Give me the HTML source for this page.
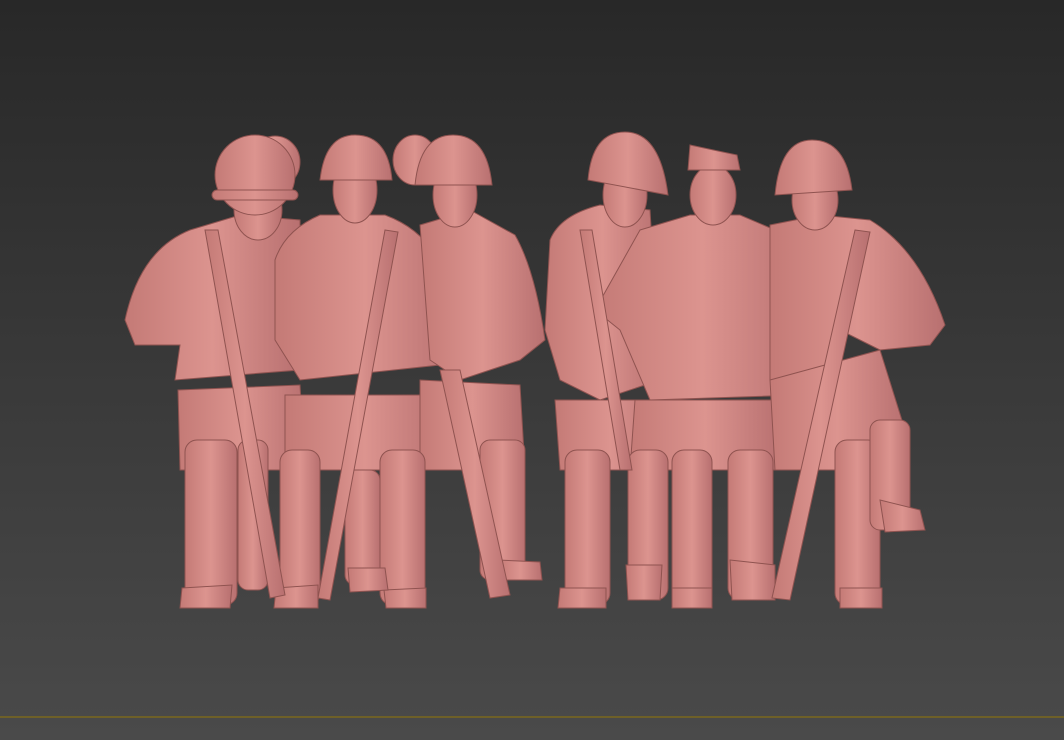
<!DOCTYPE html>
<html><head><meta charset="utf-8"><style>
html,body{margin:0;padding:0;width:1064px;height:740px;overflow:hidden;background:#333}
svg{display:block}
</style></head><body>
<svg width="1064" height="740" viewBox="0 0 1064 740">
<defs>
<linearGradient id="bg" x1="0" y1="0" x2="0" y2="1">
<stop offset="0" stop-color="#282828"/><stop offset="1" stop-color="#4a4a4a"/>
</linearGradient>
<linearGradient id="sk" x1="0" y1="0" x2="1" y2="0">
<stop offset="0" stop-color="#c47a76"/><stop offset="0.5" stop-color="#dc948f"/><stop offset="1" stop-color="#b87070"/>
</linearGradient>
</defs>
<rect width="1064" height="740" fill="url(#bg)"/>
<rect x="0" y="716" width="1064" height="2" fill="#6e6028"/>
<g fill="url(#sk)" stroke="#8f5350" stroke-width="1">
<ellipse cx="275" cy="162" rx="25" ry="26"/>
<ellipse cx="415" cy="160" rx="22" ry="25"/>
<path d="M125 320 Q140 250 190 230 L240 215 L300 220 L300 370 L175 380 L180 345 L135 345 Z"/>
<path d="M275 260 Q285 230 320 215 L385 215 Q425 230 440 265 L455 350 L440 365 L300 380 L275 340 Z"/>
<path d="M420 225 L470 210 L515 235 Q535 270 545 340 L520 360 L460 380 L430 360 Z"/>
<path d="M550 240 Q560 215 600 205 L650 210 L660 380 L600 400 L560 380 L545 330 Z"/>
<path d="M640 230 L690 215 L740 215 L775 230 L810 260 L800 395 L650 400 L620 330 L595 310 Z"/>
<path d="M770 225 L820 215 L870 220 Q920 250 945 325 L930 345 L880 350 L840 330 L830 380 L770 380 Z"/>
<ellipse cx="258" cy="210" rx="24" ry="30"/>
<circle cx="255" cy="175" r="40"/>
<rect x="212" y="190" width="86" height="10" rx="5"/>
<ellipse cx="355" cy="190" rx="22" ry="33"/>
<path d="M320 180 Q325 135 355 135 Q388 135 392 180 Z"/>
<ellipse cx="455" cy="195" rx="22" ry="32"/>
<path d="M415 185 Q420 135 453 135 Q487 135 492 185 Z"/>
<ellipse cx="625" cy="195" rx="22" ry="32"/>
<path d="M588 180 Q592 132 625 132 Q660 132 668 195 Z"/>
<ellipse cx="713" cy="195" rx="23" ry="30"/>
<path d="M688 170 L690 145 L737 155 L740 170 Z"/>
<ellipse cx="815" cy="200" rx="23" ry="30"/>
<path d="M775 195 Q780 140 812 140 Q846 140 852 190 Z"/>
<path d="M178 390 L300 385 L305 470 L180 470 Z"/>
<path d="M285 395 L440 395 L445 470 L285 470 Z"/>
<path d="M420 380 L520 385 L525 470 L420 470 Z"/>
<path d="M555 400 L660 400 L665 470 L560 470 Z"/>
<path d="M635 400 L775 400 L780 470 L630 470 Z"/>
<path d="M770 380 L880 350 L905 430 L860 470 L775 470 Z"/>
<rect x="185" y="440" width="52" height="165" rx="12"/>
<rect x="238" y="440" width="30" height="150" rx="10"/>
<rect x="280" y="450" width="40" height="155" rx="12"/>
<rect x="380" y="450" width="45" height="155" rx="12"/>
<rect x="345" y="470" width="35" height="115" rx="10"/>
<rect x="480" y="440" width="45" height="140" rx="10"/>
<rect x="565" y="450" width="45" height="155" rx="12"/>
<rect x="628" y="450" width="40" height="150" rx="12"/>
<rect x="672" y="450" width="40" height="155" rx="12"/>
<rect x="728" y="450" width="45" height="150" rx="12"/>
<rect x="835" y="440" width="45" height="165" rx="12"/>
<rect x="870" y="420" width="40" height="110" rx="10"/>
<!-- feet -->
<path d="M182 588 L232 585 L230 608 L180 608 Z"/>
<path d="M276 588 L318 585 L318 608 L274 608 Z"/>
<path d="M384 590 L426 588 L426 608 L386 608 Z"/>
<path d="M348 568 L385 568 L388 590 L350 592 Z"/>
<path d="M498 560 L540 562 L542 580 L500 580 Z"/>
<path d="M560 588 L606 588 L606 608 L558 608 Z"/>
<path d="M626 565 L662 565 L660 600 L628 600 Z"/>
<path d="M672 588 L712 588 L712 608 L672 608 Z"/>
<path d="M730 560 L775 565 L775 600 L732 600 Z"/>
<path d="M840 588 L882 588 L882 608 L840 608 Z"/>
<path d="M880 500 L920 510 L925 530 L885 532 Z"/>
<path d="M205 230 L218 230 L285 595 L270 598 Z"/>
<path d="M385 230 L398 232 L330 600 L318 598 Z"/>
<path d="M440 370 L460 370 L510 595 L490 598 Z"/>
<path d="M580 230 L592 230 L632 470 L620 470 Z"/>
<path d="M855 230 L870 232 L790 600 L772 598 Z"/>
</g>
</svg>
</body></html>
